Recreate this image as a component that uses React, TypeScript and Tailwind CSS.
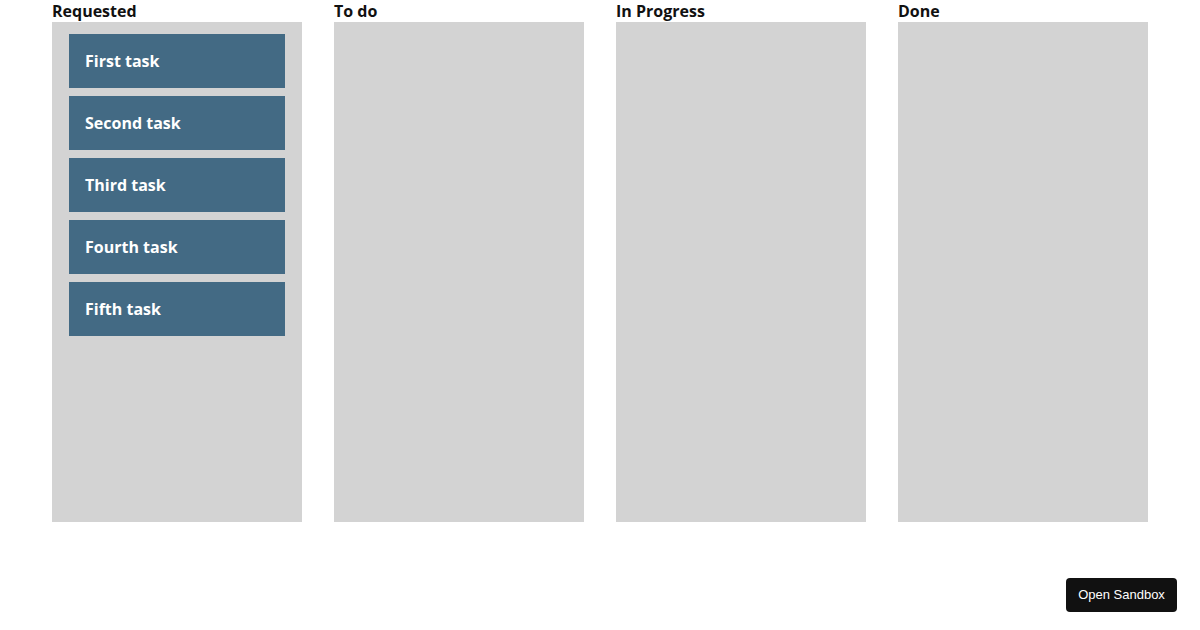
import React from "react";

const columns = [
  { title: "Requested", tasks: ["First task", "Second task", "Third task", "Fourth task", "Fifth task"] },
  { title: "To do", tasks: [] as string[] },
  { title: "In Progress", tasks: [] as string[] },
  { title: "Done", tasks: [] as string[] },
];

export default function App() {
  return (
    <div className="relative w-[1200px] h-[630px] bg-white" style={{ fontFamily: '"Open Sans", sans-serif' }}>
      <div className="flex gap-[32px] pl-[52px]">
        {columns.map((col) => (
          <div key={col.title} className="w-[250px] flex flex-col">
            <div className="h-[22px] text-[16px] leading-[22px] font-bold text-[#111]">{col.title}</div>
            <div className="h-[500px] bg-[#d3d3d3] pt-[12px] px-[17px] flex flex-col gap-[8px]">
              {col.tasks.map((t) => (
                <div key={t} className="h-[54px] bg-[#436a84] flex items-center pl-[16px] text-white font-bold text-[16px]">
                  {t}
                </div>
              ))}
            </div>
          </div>
        ))}
      </div>
      <button
        className="absolute left-[1066px] top-[578px] w-[111px] h-[34px] rounded-[4px] bg-[#111] text-white text-[13px] flex items-center justify-center"
        style={{ fontFamily: '"Liberation Sans", Arial, sans-serif' }}
      >
        Open Sandbox
      </button>
    </div>
  );
}
